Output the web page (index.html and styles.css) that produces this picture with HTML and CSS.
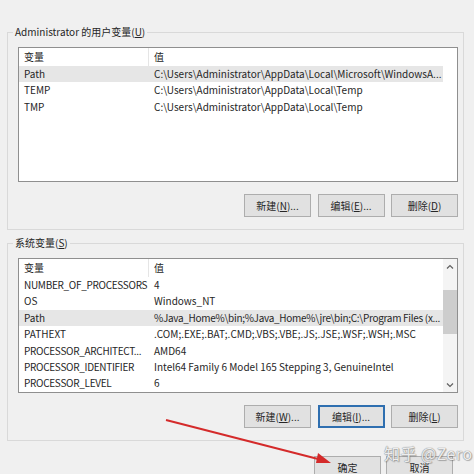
FILE: index.html
```html
<!DOCTYPE html>
<html lang="zh-CN">
<head>
    <meta charset="UTF-8">
    <meta name="viewport" content="width=device-width, initial-scale=1.0">
    <title>环境变量</title>
    <link rel="stylesheet" href="styles.css">
</head>
<body>
    <div class="dialog">
        <!-- 用户变量 -->
        <div class="group">
            <div class="group-title">Administrator 的用户变量(<u>U</u>)</div>
            <div class="list">
                <div class="row head">
                    <div class="cell name">变量</div>
                    <div class="cell value">值</div>
                </div>
                <div class="row selected">
                    <div class="cell name">Path</div>
                    <div class="cell value">C:\Users\Administrator\AppData\Local\Microsoft\WindowsA...</div>
                </div>
                <div class="row">
                    <div class="cell name">TEMP</div>
                    <div class="cell value">C:\Users\Administrator\AppData\Local\Temp</div>
                </div>
                <div class="row">
                    <div class="cell name">TMP</div>
                    <div class="cell value">C:\Users\Administrator\AppData\Local\Temp</div>
                </div>
            </div>
            <div class="buttons">
                <button class="btn">新建(<u>N</u>)...</button>
                <button class="btn">编辑(<u>E</u>)...</button>
                <button class="btn">删除(<u>D</u>)</button>
            </div>
        </div>

        <!-- 系统变量 -->
        <div class="group second">
            <div class="group-title">系统变量(<u>S</u>)</div>
            <div class="list with-scroll">
                <div class="rows">
                    <div class="row head">
                        <div class="cell name">变量</div>
                        <div class="cell value">值</div>
                    </div>
                    <div class="row">
                        <div class="cell name tight">NUMBER_OF_PROCESSORS</div>
                        <div class="cell value">4</div>
                    </div>
                    <div class="row">
                        <div class="cell name">OS</div>
                        <div class="cell value">Windows_NT</div>
                    </div>
                    <div class="row selected">
                        <div class="cell name">Path</div>
                        <div class="cell value tight">%Java_Home%\bin;%Java_Home%\jre\bin;C:\Program Files (x...</div>
                    </div>
                    <div class="row">
                        <div class="cell name">PATHEXT</div>
                        <div class="cell value">.COM;.EXE;.BAT;.CMD;.VBS;.VBE;.JS;.JSE;.WSF;.WSH;.MSC</div>
                    </div>
                    <div class="row">
                        <div class="cell name tight">PROCESSOR_ARCHITECT...</div>
                        <div class="cell value">AMD64</div>
                    </div>
                    <div class="row">
                        <div class="cell name tight">PROCESSOR_IDENTIFIER</div>
                        <div class="cell value">Intel64 Family 6 Model 165 Stepping 3, GenuineIntel</div>
                    </div>
                    <div class="row">
                        <div class="cell name tight">PROCESSOR_LEVEL</div>
                        <div class="cell value">6</div>
                    </div>
                </div>
                <div class="scrollbar">
                    <svg class="arrow-btn" width="14" height="14" viewBox="0 0 14 14"><path d="M4 8.5 L7 5.5 L10 8.5" fill="none" stroke="#606060" stroke-width="1.2"/></svg>
                    <div class="track"><div class="thumb"></div></div>
                    <svg class="arrow-btn" width="14" height="14" viewBox="0 0 14 14"><path d="M4 5.5 L7 8.5 L10 5.5" fill="none" stroke="#606060" stroke-width="1.2"/></svg>
                </div>
            </div>
            <div class="buttons">
                <button class="btn">新建(<u>W</u>)...</button>
                <button class="btn focused">编辑(<u>I</u>)...</button>
                <button class="btn">删除(<u>L</u>)</button>
            </div>
        </div>

        <div class="footer-buttons">
            <button class="btn">确定</button>
            <button class="btn">取消</button>
        </div>
    </div>

    <!-- 标注箭头 -->
    <svg class="annotation" width="474" height="474" viewBox="0 0 474 474">
        <line x1="166" y1="420" x2="322" y2="460" stroke="#d42a2a" stroke-width="2"/>
        <path d="M331 463 L318 453 L316 463 Z" fill="#d42a2a"/>
    </svg>

    <div class="watermark">知乎 @Zero</div>
</body>
</html>
```

FILE: styles.css
```css
/* General */
body {
    margin: 0;
    padding: 0;
    width: 474px;
    height: 474px;
    overflow: hidden;
    background: #f0f0f0;
    font-family: "Noto Sans CJK SC", "Noto Sans", sans-serif;
    font-size: 10px;
    color: #262626;
    position: relative;
}

u {
    text-decoration: underline;
    text-underline-offset: 1px;
}

.dialog {
    padding-top: 32px;
}

/* Group boxes */
.group {
    width: 457px;
    box-sizing: border-box;
    margin-left: 7px;
    border: 1px solid #d9d9d9;
    padding: 0 5px 12px 10px;
}

.group.second {
    margin-top: 13px;
}

.group-title {
    width: fit-content;
    height: 16px;
    line-height: 16px;
    margin: -9px 0 0 -5px;
    padding: 0 2px;
    background: #f0f0f0;
}

/* List views */
.list {
    margin-top: 7px;
    width: 440px;
    height: 135px;
    box-sizing: border-box;
    border: 1px solid #8f8f8f;
    background: #fff;
    overflow: hidden;
}

.list.with-scroll {
    display: flex;
}

.rows {
    width: 424px;
}

.row {
    display: flex;
    width: 424px;
    height: 16.4px;
    line-height: 16.4px;
    white-space: nowrap;
}

.row.head {
    height: 18px;
    line-height: 18px;
}

.row.selected {
    background: #e6e6e6;
}

.cell {
    padding-left: 5px;
    box-sizing: border-box;
    overflow: hidden;
}

.cell.name {
    width: 130px;
}

.cell.tight {
    letter-spacing: -0.3px;
}

.row.head .cell.name {
    border-right: 1px solid #e5e5e5;
}

.cell.value {
    flex: 1;
}

/* Scrollbar */
.scrollbar {
    width: 14px;
    display: flex;
    flex-direction: column;
    background: #f4f4f4;
}

.arrow-btn {
    display: block;
    margin-top: 1px;
}

.track {
    flex: 1;
    padding-top: 16px;
}

.thumb {
    height: 44px;
    background: #cdcdcd;
}

/* Buttons */
.buttons {
    display: flex;
    justify-content: flex-end;
    gap: 6.5px;
    margin-top: 12px;
}

.btn {
    width: 67px;
    height: 23px;
    box-sizing: border-box;
    padding: 0;
    border: 1px solid #adadad;
    background: #e1e1e1;
    font-family: inherit;
    font-size: 10px;
    color: #262626;
    line-height: 20px;
}

.btn.focused {
    border: 2px solid #2f6fb0;
}

.footer-buttons {
    display: flex;
    justify-content: flex-end;
    gap: 5px;
    margin: 15px 21px 0 0;
}

/* Overlays */
.annotation {
    position: absolute;
    left: 0;
    top: 0;
    pointer-events: none;
}

.watermark {
    position: absolute;
    left: 384px;
    top: 441px;
    font-size: 16px;
    color: rgba(255, 255, 255, 0.85);
    text-shadow: 0 0 1px #8a8a8a, 0 0 1px #8a8a8a, 1px 1px 1px rgba(0, 0, 0, 0.25);
    letter-spacing: 0.5px;
}
```
